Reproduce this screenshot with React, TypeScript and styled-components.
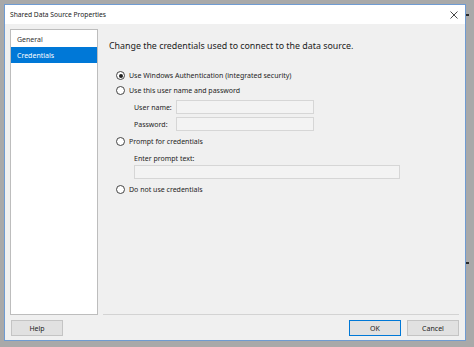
import styled, { createGlobalStyle } from "styled-components";

const GlobalStyle = createGlobalStyle`
  html, body {
    margin: 0;
    padding: 0;
    background: #a9a9a9;
  }
  body {
    font-family: "Noto Sans", "Open Sans", sans-serif;
    color: #1e1e1e;
  }
`;

const Screen = styled.div`
  position: relative;
  width: 474px;
  height: 347px;
  box-sizing: border-box;
  padding: 4px 8px 6px 4px;
  background: #a9a9a9;
`;

const EdgeMark = styled.span<{ $top: number }>`
  position: absolute;
  right: 5px;
  top: ${(p) => p.$top}px;
  width: 3px;
  height: 2px;
  background: #2a2a2a;
`;

const Window = styled.div`
  height: 100%;
  box-sizing: border-box;
  border: 1px solid #6f9bd2;
  background: #f0f0f0;
  display: flex;
  flex-direction: column;
`;

const TitleBar = styled.div`
  height: 19px;
  flex: none;
  background: #ffffff;
  display: flex;
  align-items: center;
  justify-content: space-between;
  padding: 0 7px 0 5px;
  font-size: 6.7px;
  color: #222;
`;

const Body = styled.div`
  flex: 1;
  min-height: 0;
  display: grid;
  grid-template-columns: 88px 1fr;
  grid-template-rows: 1fr auto;
  column-gap: 5px;
  padding: 5px 6px 4px 5px;
`;

const Nav = styled.div`
  background: #ffffff;
  border: 1px solid #bdbdbd;
  box-sizing: border-box;
  display: flex;
  flex-direction: column;
  padding-top: 1px;
`;

const NavItem = styled.div<{ $active?: boolean }>`
  height: 16px;
  display: flex;
  align-items: center;
  padding-left: 6px;
  font-size: 7px;
  color: ${(p) => (p.$active ? "#ffffff" : "#333")};
  background: ${(p) => (p.$active ? "#0078d7" : "transparent")};
`;

const Content = styled.div`
  border-bottom: 1px solid #d3d3d3;
  display: flex;
  flex-direction: column;
  padding: 11px 0 0 6px;
`;

const Heading = styled.div`
  height: 12px;
  line-height: 12px;
  font-size: 8.85px;
  color: #222;
`;

const Options = styled.div`
  display: flex;
  flex-direction: column;
  margin-top: 16px;
  padding-left: 7px;
`;

const OptionRow = styled.div<{ $gap?: number }>`
  height: 15px;
  display: flex;
  align-items: center;
  gap: 4px;
  margin-top: ${(p) => p.$gap ?? 0}px;
  font-size: 7px;
`;

const Radio = styled.span<{ $checked?: boolean }>`
  width: 9px;
  height: 9px;
  box-sizing: border-box;
  border-radius: 50%;
  border: 1px solid #444;
  background: #fff;
  display: flex;
  align-items: center;
  justify-content: center;

  &::after {
    content: "";
    width: 4px;
    height: 4px;
    border-radius: 50%;
    background: ${(p) => (p.$checked ? "#222" : "transparent")};
  }
`;

const FieldRow = styled.div<{ $gap: number }>`
  display: flex;
  align-items: center;
  margin-top: ${(p) => p.$gap}px;
  padding-left: 18px;
  font-size: 7px;
`;

const FieldLabel = styled.span`
  width: 42px;
`;

const TextBox = styled.div<{ $width: number }>`
  width: ${(p) => p.$width}px;
  height: 14px;
  box-sizing: border-box;
  border: 1px solid #d6d6d6;
  background: #f3f3f3;
`;

const PromptLabel = styled.div`
  height: 14px;
  display: flex;
  align-items: center;
  margin-top: 2px;
  padding-left: 18px;
  font-size: 7px;
`;

const PromptBox = styled(TextBox)`
  margin-left: 18px;
`;

const Footer = styled.div`
  grid-column: 1 / -1;
  display: flex;
  align-items: center;
  gap: 6px;
  margin-top: 5px;
  padding-left: 1px;
`;

const Button = styled.button<{ $default?: boolean }>`
  width: 52px;
  height: 16px;
  box-sizing: border-box;
  padding: 0;
  font-family: inherit;
  font-size: 7px;
  color: #222;
  background: #e1e1e1;
  border: 1px solid ${(p) => (p.$default ? "#0078d7" : "#c4c4c4")};
`;

const Spacer = styled.div`
  flex: 1;
`;

const CloseIcon = () => (
  <svg width="8" height="8" viewBox="0 0 8 8">
    <path d="M0.5 0.5 L7.5 7.5 M7.5 0.5 L0.5 7.5" stroke="#333" strokeWidth="0.9" />
  </svg>
);

export default function App() {
  return (
    <>
      <GlobalStyle />
      <Screen>
        <EdgeMark $top={14} />
        <EdgeMark $top={262} />
        <Window>
          <TitleBar>
            <span>Shared Data Source Properties</span>
            <CloseIcon />
          </TitleBar>
          <Body>
            <Nav>
              <NavItem>General</NavItem>
              <NavItem $active>Credentials</NavItem>
            </Nav>
            <Content>
              <Heading>Change the credentials used to connect to the data source.</Heading>
              <Options>
                <OptionRow>
                  <Radio $checked />
                  Use Windows Authentication (integrated security)
                </OptionRow>
                <OptionRow>
                  <Radio />
                  Use this user name and password
                </OptionRow>
                <FieldRow $gap={2}>
                  <FieldLabel>User name:</FieldLabel>
                  <TextBox $width={138} />
                </FieldRow>
                <FieldRow $gap={3}>
                  <FieldLabel>Password:</FieldLabel>
                  <TextBox $width={138} />
                </FieldRow>
                <OptionRow $gap={3}>
                  <Radio />
                  Prompt for credentials
                </OptionRow>
                <PromptLabel>Enter prompt text:</PromptLabel>
                <PromptBox $width={266} />
                <OptionRow $gap={3}>
                  <Radio />
                  Do not use credentials
                </OptionRow>
              </Options>
            </Content>
            <Footer>
              <Button>Help</Button>
              <Spacer />
              <Button $default>OK</Button>
              <Button>Cancel</Button>
            </Footer>
          </Body>
        </Window>
      </Screen>
    </>
  );
}
